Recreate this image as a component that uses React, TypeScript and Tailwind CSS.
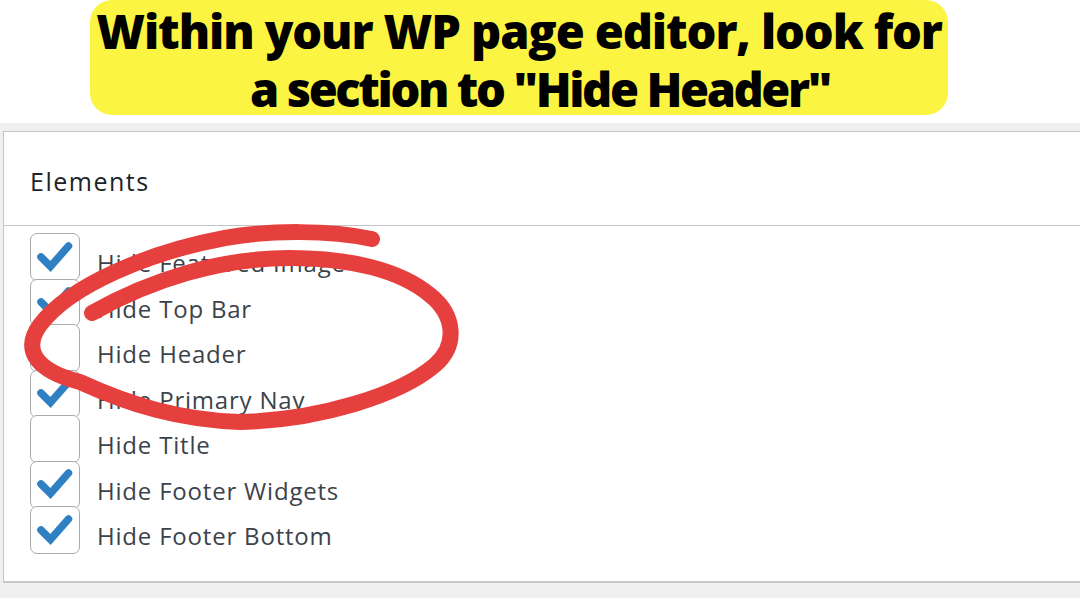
const items = [
  { label: "Hide Featured Image", checked: true },
  { label: "Hide Top Bar", checked: true },
  { label: "Hide Header", checked: false },
  { label: "Hide Primary Nav", checked: true },
  { label: "Hide Title", checked: false },
  { label: "Hide Footer Widgets", checked: true },
  { label: "Hide Footer Bottom", checked: true },
];

const Checkbox = ({ checked }: { checked: boolean }) => (
  <div className="w-[50px] h-[48px] shrink-0 rounded-[7px] border-[1.5px] border-[#a7aaad] bg-white relative">
    {checked && (
      <svg viewBox="0 0 50 48" className="absolute -left-[1.5px] -top-[1.5px] w-[50px] h-[48px]">
        <path
          d="M11 24 L20.5 33.5 L38.5 13"
          fill="none"
          stroke="#2f7fc3"
          strokeWidth="7.5"
          strokeLinecap="round"
          strokeLinejoin="miter"
        />
      </svg>
    )}
  </div>
);

const App = () => {
  return (
    <div className="relative w-[1080px] h-[608px] overflow-hidden bg-white font-['Open_Sans',sans-serif]">
      <div className="h-[123px]">
        <div className="ml-[90px] w-[858px] h-[115px] pt-[2px] rounded-[22px] bg-[#fcf442] text-center text-black font-extrabold text-[47px] leading-[58px] whitespace-nowrap">
          <div className="tracking-[-1.1px]">Within your WP page editor, look for</div>
          <div className="tracking-[-2.4px] pl-[42px]">a section to "Hide Header"</div>
        </div>
      </div>

      <div className="bg-[#f0f0f1] pt-[8px] pb-[15px] pl-[3px]">
        <div className="bg-white border border-[#c3c4c7] border-r-0 border-b-2 border-b-[#c8c8c8]">
          <div className="h-[94px] border-b border-[#c3c4c7] pl-[26px] pt-[37px]">
            <h2 className="text-[25px] leading-[25px] tracking-[1.5px] font-medium text-[#1d2327]">
              Elements
            </h2>
          </div>
          <div className="pt-[7px] pb-[29px] pl-[26px]">
            {items.map((item) => (
              <div key={item.label} className="flex items-start h-[45.5px]">
                <Checkbox checked={item.checked} />
                <span className="ml-[17px] mt-[18px] text-[24px] leading-[24px] tracking-[0.8px] text-[#3c434a] whitespace-nowrap">
                  {item.label}
                </span>
              </div>
            ))}
          </div>
        </div>
      </div>

      {/* marker circle drawn over the list */}
      <svg
        viewBox="0 0 1080 608"
        className="absolute inset-0 w-[1080px] h-[608px] pointer-events-none"
      >
        <path
          d="M372 239 C330 230 270 230 225 238 C150 252 70 285 40 325 C20 352 40 372 80 382 C130 405 180 420 240 422 C320 420 400 395 435 365 C458 345 455 315 430 295 C400 270 350 258 290 258 C220 258 150 280 92 313"
          fill="none"
          stroke="#e6403e"
          strokeWidth="16"
          strokeLinecap="round"
          strokeLinejoin="round"
        />
      </svg>
    </div>
  );
};

export default App;
